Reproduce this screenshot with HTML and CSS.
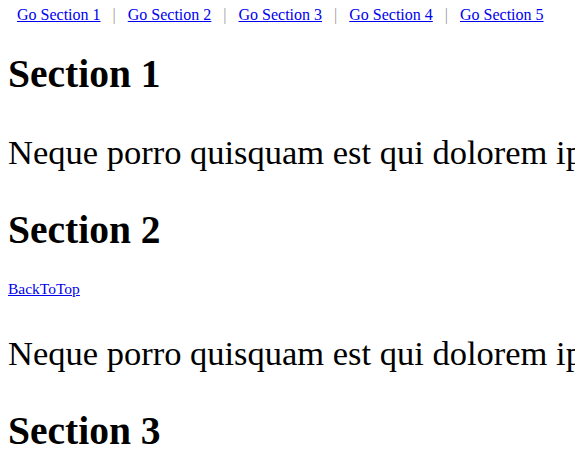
FILE: index.html
```html
<!DOCTYPE html>
<html>
<head>
<meta charset="utf-8">
<link rel="stylesheet" href="styles.css">
</head>
<body>
<nav class="nav">
  <a href="#s1">Go Section 1</a><span class="sep">|</span>
  <a href="#s2">Go Section 2</a><span class="sep">|</span>
  <a href="#s3">Go Section 3</a><span class="sep">|</span>
  <a href="#s4">Go Section 4</a><span class="sep">|</span>
  <a href="#s5">Go Section 5</a>
</nav>
<h1 class="title" id="s1">Section 1</h1>
<p class="text">Neque porro quisquam est qui dolorem ipsum quia dolor sit amet, consectetur, adipisci velit...</p>
<h1 class="title" id="s2">Section 2</h1>
<a class="back" href="#">BackToTop</a>
<p class="text">Neque porro quisquam est qui dolorem ipsum quia dolor sit amet, consectetur, adipisci velit...</p>
<h1 class="title" id="s3">Section 3</h1>
</body>
</html>
```
FILE: styles.css
```css
body {
  margin: 8px;
  font-family: "Liberation Serif", "Times New Roman", serif;
  overflow: hidden;
}
.nav {
  display: flex;
  font-size: 16px;
  line-height: 18px;
  padding-left: 9px;
  margin-top: -2px;
}
.nav a {
  color: #0000ee;
}
.sep {
  color: #999;
  padding: 0 12px;
}
.title {
  font-size: 39.5px;
  line-height: 46px;
  font-weight: bold;
  margin: 27px 0;
}
.text {
  font-size: 34.5px;
  line-height: 40px;
  white-space: nowrap;
  margin: 35px 0;
}
.back {
  color: #0000ee;
  font-size: 15.5px;
  line-height: 18px;
}
```
